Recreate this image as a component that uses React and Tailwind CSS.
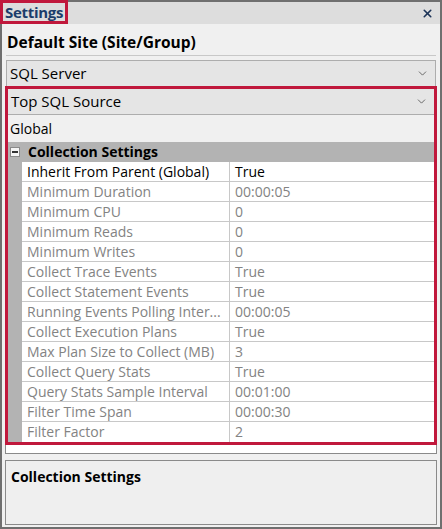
import { ChevronDown, X } from "lucide-react";

const rows = [
  ["Inherit From Parent (Global)", "True", true],
  ["Minimum Duration", "00:00:05"],
  ["Minimum CPU", "0"],
  ["Minimum Reads", "0"],
  ["Minimum Writes", "0"],
  ["Collect Trace Events", "True"],
  ["Collect Statement Events", "True"],
  ["Running Events Polling Inter...", "00:00:05"],
  ["Collect Execution Plans", "True"],
  ["Max Plan Size to Collect (MB)", "3"],
  ["Collect Query Stats", "True"],
  ["Query Stats Sample Interval", "00:01:00"],
  ["Filter Time Span", "00:00:30"],
  ["Filter Factor", "2"],
];

const Dropdown = ({ label, className = "" }) => (
  <div
    className={`flex items-center justify-between bg-[#e5e5e5] border-[#adadad] pl-[3px] pr-[6px] leading-none ${className}`}
  >
    <span className="text-[15px] text-black">{label}</span>
    <ChevronDown size={13} strokeWidth={1.4} className="text-[#444]" />
  </div>
);

const App = () => {
  return (
    <div
      className="w-[442px] h-[529px] bg-[#6f6f6f] px-[2px] pb-[2px] pt-[2px] flex flex-col"
      style={{ fontFamily: '"Open Sans", "Noto Sans", sans-serif' }}
    >
      <div className="flex-1 flex flex-col bg-[#f0f0f0]">
        {/* title bar */}
        <div className="flex items-stretch justify-between h-[22px] bg-[#dddddd]">
          <div className="border-[3px] border-[#c0183c] -ml-[2px] -mt-[2px] h-[24px] w-[68px] px-[2px] flex items-center">
            <span className="text-[15px] font-bold text-[#1c3d6b] leading-none tracking-[-0.3px]">Settings</span>
          </div>
          <X size={13} strokeWidth={3} className="text-[#1c3357] self-center mr-[6px]" />
        </div>

        <div className="flex flex-col px-[3px]">
          <div className="mx-[1px] h-[32px] flex items-end pb-[3px] border-b border-[#c8c8c8] leading-[20px]">
            <span className="text-[15.5px] font-bold text-black pl-[1px]">Default Site (Site/Group)</span>
          </div>
          <Dropdown label="SQL Server" className="mt-[4px] mx-[1px] h-[27px] border" />

          <div className="flex flex-col">
            <div className="border-[3px] border-[#c0183c] flex flex-col bg-white -mt-[1px]">
              <Dropdown label="Top SQL Source" className="h-[26px] border-b" />
              <div className="h-[27px] flex items-center bg-[#f0f0f0] pl-[2px] leading-none">
                <span className="text-[14px] text-black">Global</span>
              </div>
              <div className="flex h-[20px] bg-[#b3b3b3] items-center leading-none">
                <div className="w-[14px] flex justify-center">
                  <div className="w-[10px] h-[10px] bg-[#f4f4f4] border border-[#8a8a8a] flex items-center justify-center">
                    <div className="w-[6px] h-[2px] bg-[#333]" />
                  </div>
                </div>
                <span className="pl-[6px] text-[14px] font-bold text-black">Collection Settings</span>
              </div>
              <div className="flex bg-white">
                <div className="w-[14px] bg-[#b3b3b3]" />
                <div className="flex-1 flex flex-col">
                  {rows.map(([name, value, active]) => (
                    <div key={name} className="flex h-[20px] border-b border-[#c8c8c8] last:border-b-0">
                      <div
                        className={`w-[208px] border-r border-[#c8c8c8] pl-[5px] text-[14px] leading-[19px] truncate ${active ? "text-black" : "text-[#838383]"}`}
                      >
                        {name}
                      </div>
                      <div
                        className={`flex-1 pl-[5px] text-[14px] leading-[19px] ${active ? "text-black" : "text-[#838383]"}`}
                      >
                        {value}
                      </div>
                    </div>
                  ))}
                </div>
              </div>
            </div>
            <div className="h-[9px] bg-white border border-t-0 border-[#8a8a8a]" />
          </div>

          <div className="mt-[6px] h-[65px] border border-[#8a8a8a] bg-[#efefef] px-[5px] pt-[5px] leading-[20px]">
            <span className="text-[14px] font-bold text-black">Collection Settings</span>
          </div>
        </div>
      </div>
    </div>
  );
};

export default App;
